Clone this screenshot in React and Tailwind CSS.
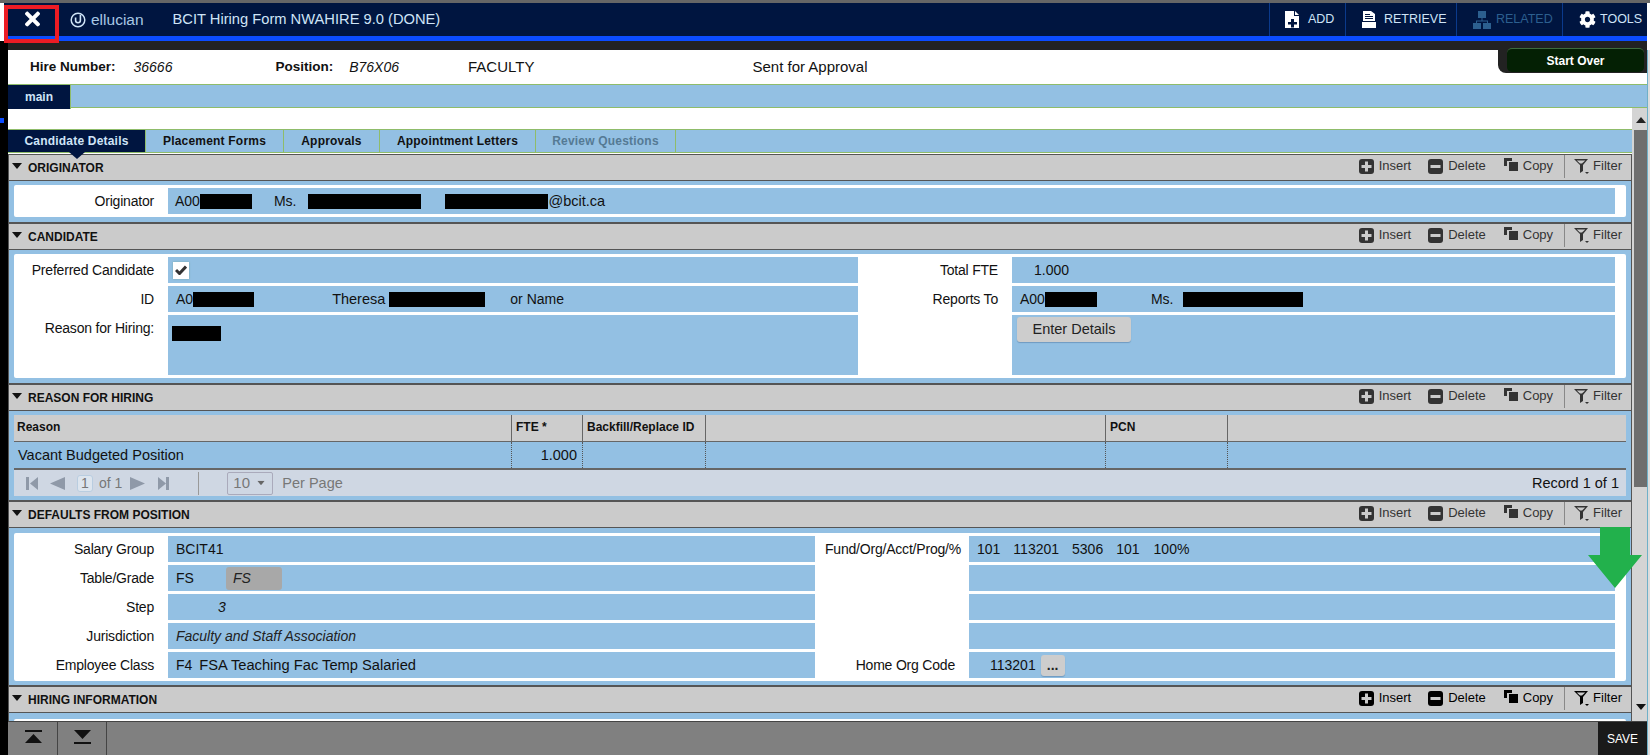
import { FaCog, FaTimes } from 'react-icons/fa'

function Redact({ w, h = 15, ml = 0 }) {
  return <span className="inline-block shrink-0 bg-black" style={{ width: w, height: h, marginLeft: ml }} />
}

function Caret({ className = '' }) {
  return (
    <svg width="10" height="6" viewBox="0 0 10 6" className={className}>
      <path d="M0 0h10L5 6z" fill="currentColor" />
    </svg>
  )
}

function BoxIcon({ minus }) {
  return (
    <svg width="15" height="15" viewBox="0 0 15 15" className="shrink-0">
      <rect width="15" height="15" rx="3" fill="currentColor" />
      <rect x="2.5" y="6" width="10" height="3" fill="#cbcbcb" />
      {!minus && <rect x="6" y="2.5" width="3" height="10" fill="#cbcbcb" />}
    </svg>
  )
}

function CopyIcon() {
  return (
    <svg width="15" height="14" viewBox="0 0 15 14" className="mb-[3px] shrink-0">
      <path d="M0 0h8v3H3v5H0z" fill="currentColor" />
      <rect x="5" y="4" width="9" height="9" fill="currentColor" />
    </svg>
  )
}

function FilterIcon() {
  return (
    <svg width="16" height="17" viewBox="0 0 16 17" className="shrink-0">
      <path d="M0 1h14L9 7v6l-3 2V7z" fill="currentColor" />
      <path d="M2.8 2.5h8.4L8 5.6H6z" fill="#cbcbcb" />
      <path d="M11 14h4l-2 2z" fill="currentColor" />
    </svg>
  )
}

function Section({ title, dark, children, bodyClass = '' }) {
  return (
    <section className="shrink-0 border-x border-[#555]">
      <div className="flex h-[26px] items-center border-b border-[#555] bg-[#cbcbcb]">
        <Caret className="ml-[3px] mb-1 text-[#111]" />
        <span className="ml-[6px] text-xs font-bold text-[#111]">{title}</span>
        <div className={`ml-auto flex h-full items-center pb-[3px] text-[13px] ${dark ? 'text-black' : 'text-[#333]'}`}>
          <span className="flex items-center gap-[5px]"><BoxIcon />Insert</span>
          <span className="ml-[17px] flex items-center gap-[5px]"><BoxIcon minus />Delete</span>
          <span className="ml-[18px] flex items-center gap-1"><CopyIcon />Copy</span>
          <span className="ml-[11px] h-[23px] border-l border-[#888]" />
          <span className="ml-[9px] mr-[9px] flex items-center gap-[3px]"><FilterIcon />Filter</span>
        </div>
      </div>
      <div className={`bg-[#93c0e3] px-[5px] ${bodyClass}`}>{children}</div>
    </section>
  )
}

function Card({ children, className = '' }) {
  return <div className={`flex flex-col gap-[3px] rounded-[2px] bg-white py-[3px] pr-[11px] ${className}`}>{children}</div>
}

function Label({ children, className = 'w-[140px]' }) {
  return <div className={`shrink-0 text-right text-sm tracking-[-0.2px] text-[#111] ${className}`}>{children}</div>
}

function Field({ children, className = '' }) {
  return <div className={`flex h-[26px] items-center bg-[#93c0e3] text-sm text-[#111] ${className}`}>{children}</div>
}

function TopAction({ icon, label, className = '', disabled }) {
  return (
    <div className={`flex h-full items-center border-l border-[#0b3a8c] text-[12.5px] ${disabled ? 'text-[#2c5f8f]' : 'text-[#cfe4f7]'} ${className}`}>
      {icon}
      {label}
    </div>
  )
}

function Tab({ children, className }) {
  return (
    <div className={`flex h-full items-center justify-center border-r border-[#8fbc6a] text-xs font-bold tracking-[0.2px] ${className}`}>
      {children}
    </div>
  )
}

function PagerArrow({ d, w = 15 }) {
  return (
    <svg width={w} height="15" viewBox={`0 0 ${w} 15`} className="shrink-0 text-[#8f99a8]">
      <path d={d} fill="currentColor" />
    </svg>
  )
}

function GridCell({ children, className = '' }) {
  return <div className={`flex h-full items-center ${className}`}>{children}</div>
}

export default function App() {
  return (
    <div className="relative flex h-[755px] w-[1650px] flex-col overflow-hidden bg-white font-['Liberation_Sans',Arial,sans-serif]">
      {/* top bar */}
      <div className="h-[3px] shrink-0 bg-[#666]" />
      <div className="shrink-0 bg-white pl-1 pr-[3px]">
        <div className="flex h-[33px] items-center bg-[#001540]">
          <FaTimes className="ml-[21px] mb-[2px] w-[15px] shrink-0 text-[22px] text-white" />
          <svg width="16" height="16" viewBox="0 0 16 16" className="ml-[30px] text-[#cfe4f7]">
            <circle cx="8" cy="8" r="6.8" fill="none" stroke="currentColor" strokeWidth="1.5" />
            <path d="M5.6 5.5v2.8a2.4 2.4 0 0 0 4.8 0V3" fill="none" stroke="currentColor" strokeWidth="1.6" />
          </svg>
          <span className="ml-[5px] text-[15.5px] text-[#a9c8e4]">ellucian</span>
          <span className="ml-[29px] text-[14.7px] text-[#cfe4f7]">BCIT Hiring Form NWAHIRE 9.0 (DONE)</span>
          <div className="ml-auto flex h-full">
            <TopAction
              className="w-[76px] pl-[15px]"
              label="ADD"
              icon={
                <svg width="15" height="17" viewBox="0 0 15 17" className="mr-2 text-white">
                  <path d="M0 0h9v5h5v12H0z" fill="currentColor" />
                  <path d="M10 0l4 4h-4z" fill="currentColor" />
                  <path d="M6 8h3v3h3v2.5H9V16.5H6v-3H3V11h3z" fill="#001540" />
                </svg>
              }
            />
            <TopAction
              className="w-[111px] pl-4"
              label="RETRIEVE"
              icon={
                <svg width="14" height="17" viewBox="0 0 14 17" className="mr-2 text-white">
                  <path d="M1 0h8l4 3v7H1zM0 11h14v6H0z" fill="currentColor" />
                  <path d="M3 3h5v1H3zM3 5h8v1H3zM3 7h8v1H3z" fill="#001540" />
                </svg>
              }
            />
            <TopAction
              disabled
              className="w-[106px] pl-4 font-normal"
              label="RELATED"
              icon={
                <svg width="18" height="18" viewBox="0 0 18 18" className="mr-[5px]">
                  <path d="M5 0h8v7H5zM8.5 7h1v2.5H15V12h-1v-1.5H4V12H3V9.5h5.5zM0 12h8v6H0zM10 12h8v6h-8z" fill="currentColor" />
                </svg>
              }
            />
            <TopAction
              className="w-[85px] pl-4"
              label="TOOLS"
              icon={<FaCog className="mr-1 text-[17px] text-white" />}
            />
          </div>
        </div>
        <div className="-ml-1 flex">
          <div className="w-1 bg-white" />
          <div className="h-[5px] flex-1 bg-[#0b4cff]" />
        </div>
      </div>
      <div className="flex h-[9px] shrink-0 pr-[3px]">
        <div className="w-2 bg-black" />
        <div className="flex-1 bg-[#222]" />
      </div>

      <div className="relative flex min-h-0 flex-1">
        <div className="w-2 shrink-0 bg-black" />
        <span className="absolute left-0 top-[68px] h-[5px] w-1 bg-[#0b4cff]" />

        <div className="flex w-[1639px] shrink-0 flex-col">
          {/* hire row */}
          <div className="relative flex h-[34px] shrink-0 items-center text-[#111]">
            <span className="ml-[22px] text-[13.5px] font-bold">Hire Number:</span>
            <span className="ml-[18px] text-sm italic">36666</span>
            <span className="ml-[103px] text-[13.5px] font-bold">Position:</span>
            <span className="ml-4 text-sm italic">B76X06</span>
            <span className="ml-[69px] text-[15px]">FACULTY</span>
            <span className="ml-[218px] text-[15px]">Sent for Approval</span>
            <div className="absolute right-0 top-0 h-[23px] w-[149px] rounded-bl-[8px] bg-[#222] pl-[9px] pr-[3px]">
              <div className="-mt-[2px] flex h-6 items-center justify-center rounded-[5px] border-t border-[#3d6b3d] bg-[#042004] text-xs font-bold text-white">
                Start Over
              </div>
            </div>
          </div>

          {/* main tab row */}
          <div className="relative h-6 shrink-0 border-y border-[#8fbc6a] bg-[#93c0e3]">
            <div className="absolute left-0 top-0 flex h-6 w-[63px] items-center justify-center border-r border-[#8fbc6a] bg-[#001540] text-xs font-bold text-[#cfe4f7]">
              main
            </div>
          </div>

          <div className="flex min-h-0 flex-1">
            <div className="flex min-w-0 flex-1 flex-col overflow-hidden">
              <div className="h-[21px] shrink-0" />

              {/* page tabs */}
              <div className="relative z-10 flex h-[24px] shrink-0 border-y border-[#8fbc6a] bg-[#93c0e3] pr-px">
                <Tab className="w-[138px] bg-[#001540] text-[#cfe4f7]">Candidate Details</Tab>
                <Tab className="w-[138px] text-[#111]">Placement Forms</Tab>
                <Tab className="w-[96px] text-[#111]">Approvals</Tab>
                <Tab className="w-[156px] text-[#111]">Appointment Letters</Tab>
                <Tab className="w-[140px] text-[#557a94]">Review Questions</Tab>
                <span className="absolute left-[61px] top-[22px] h-0 w-0 border-x-[8px] border-t-[7px] border-x-transparent border-t-[#001540]" />
              </div>

              <div className="h-px shrink-0 bg-white" />
              <div className="h-px shrink-0 bg-[#555]" />

              <Section title="ORIGINATOR" bodyClass="pt-1 pb-[5px]">
                <Card>
                  <div className="flex items-center">
                    <Label>Originator</Label>
                    <Field className="ml-[14px] flex-1 pl-[7px]">
                      <span>A00</span>
                      <Redact w={52} />
                      <span className="ml-[22px]">Ms.</span>
                      <Redact w={113} ml={12} />
                      <Redact w={103} ml={24} />
                      <span className="text-[14.5px]">@bcit.ca</span>
                    </Field>
                  </div>
                </Card>
              </Section>

              <div className="h-0.5 shrink-0 bg-[#555]" />

              <Section title="CANDIDATE" bodyClass="pt-1 pb-[5px]">
                <Card>
                  <div className="flex items-center">
                    <Label>Preferred Candidate</Label>
                    <Field className="ml-[14px] w-[690px] pl-[5px]">
                      <span className="flex h-[17px] w-[16px] items-center justify-center bg-white shadow-[0_0_2px_#7aa]">
                        <svg width="12" height="10" viewBox="0 0 12 10">
                          <path d="M1 5l3.5 3.5L11 1.5" fill="none" stroke="#333" strokeWidth="3" />
                        </svg>
                      </span>
                    </Field>
                    <Label className="w-[140px]">Total FTE</Label>
                    <Field className="ml-[14px] flex-1 pl-[22px]">1.000</Field>
                  </div>
                  <div className="flex items-center">
                    <Label>ID</Label>
                    <Field className="ml-[14px] w-[690px] pl-2">
                      <span>A0</span>
                      <Redact w={61} />
                      <span className="ml-[78px] text-[14.5px]">Theresa</span>
                      <Redact w={96} ml={4} />
                      <span className="ml-[25px]">or Name</span>
                    </Field>
                    <Label className="w-[140px]">Reports To</Label>
                    <Field className="ml-[14px] flex-1 pl-2">
                      <span>A00</span>
                      <Redact w={52} />
                      <span className="ml-[54px]">Ms.</span>
                      <Redact w={120} ml={10} />
                    </Field>
                  </div>
                  <div className="flex items-start">
                    <Label className="w-[140px] pt-[3px]">Reason for Hiring:</Label>
                    <div className="ml-[14px] h-[60px] w-[690px] bg-[#93c0e3] pl-1 pt-[9px]">
                      <Redact w={49} />
                    </div>
                    <div className="w-[154px]" />
                    <div className="h-[60px] flex-1 bg-[#93c0e3] pl-[5px] pt-[2px]">
                      <button className="h-[25px] w-[114px] rounded-[3px] bg-[#cdcdcd] text-[14.5px] text-[#222] shadow-[0_1px_1px_#6f9ac0]">
                        Enter Details
                      </button>
                    </div>
                  </div>
                </Card>
              </Section>

              <div className="h-0.5 shrink-0 bg-[#555]" />

              <Section title="REASON FOR HIRING" bodyClass="pt-1 pb-1">
                <div className="grid h-[27px] grid-cols-[497px_71px_123px_400px_122px_1fr] border-b border-[#666] bg-[#cdcdcd] text-xs font-bold text-[#111]">
                  <GridCell className="pb-[2px] pl-[3px]">Reason</GridCell>
                  <GridCell className="border-l border-[#666] pb-[2px] pl-1">FTE *</GridCell>
                  <GridCell className="border-l border-[#666] pb-[2px] pl-1">Backfill/Replace ID</GridCell>
                  <GridCell className="border-l border-[#666]" />
                  <GridCell className="border-l border-[#666] pb-[2px] pl-1">PCN</GridCell>
                  <GridCell className="border-l border-[#666]" />
                </div>
                <div className="grid h-[28px] grid-cols-[497px_71px_123px_400px_122px_1fr] border-b-2 border-[#666] text-[14.5px] text-[#111]">
                  <GridCell className="pl-1 pt-px">Vacant Budgeted Position</GridCell>
                  <GridCell className="justify-end border-l border-dotted border-[#555] pr-[5px] pt-px">1.000</GridCell>
                  <GridCell className="border-l border-dotted border-[#555]" />
                  <GridCell className="border-l border-dotted border-[#555]" />
                  <GridCell className="border-l border-dotted border-[#555]" />
                  <GridCell className="border-l border-dotted border-[#555]" />
                </div>
                <div className="flex h-[26px] items-center bg-[#cfd7e3] pl-3 text-sm text-[#777]">
                  <PagerArrow w={12} d="M0 1h3v13H0zM12 1v13L4 7.5z" />
                  <span className="ml-[12px]" />
                  <PagerArrow d="M15 1v13L0 7.5z" />
                  <span className="ml-3 flex h-[17px] w-[16px] items-center justify-center rounded-[3px] border border-[#b9cde0] bg-[#dde5ee]">1</span>
                  <span className="ml-[6px]">of 1</span>
                  <span className="ml-2" />
                  <PagerArrow d="M0 1v13l15-6.5z" />
                  <span className="ml-[13px]" />
                  <PagerArrow w={11} d="M0 1l8 6.5L0 14zM8 1h3v13H8z" />
                  <span className="ml-[29px] h-[23px] border-l border-[#999]" />
                  <span className="ml-[28px] flex h-[23px] w-[46px] items-center rounded-[2px] border border-[#aab] pl-[5px] text-[15px]">
                    10
                    <Caret className="ml-[6px] scale-75 text-[#666]" />
                  </span>
                  <span className="ml-[9px] text-[14.5px]">Per Page</span>
                  <span className="ml-auto pr-[7px] text-[14.5px] text-[#111]">Record 1 of 1</span>
                </div>
              </Section>

              <div className="h-0.5 shrink-0 bg-[#555]" />

              <Section title="DEFAULTS FROM POSITION" bodyClass="pt-[5px] pb-1">
                <Card>
                  <div className="flex items-center">
                    <Label>Salary Group</Label>
                    <Field className="ml-[14px] w-[647px] pl-2">BCIT41</Field>
                    <Label className="w-[146px]">Fund/Org/Acct/Prog/%</Label>
                    <Field className="ml-2 flex-1 pl-2">
                      <span>101</span>
                      <span className="ml-[13px]">113201</span>
                      <span className="ml-[13px]">5306</span>
                      <span className="ml-[13px]">101</span>
                      <span className="ml-[14px]">100%</span>
                    </Field>
                  </div>
                  <div className="flex items-center">
                    <Label>Table/Grade</Label>
                    <Field className="ml-[14px] w-[647px] pl-2">
                      <span>FS</span>
                      <span className="ml-8 flex h-[23px] w-14 items-center rounded-[3px] bg-[#a8a8a8] pl-[7px] italic text-[#222]">FS</span>
                    </Field>
                    <div className="w-[154px]" />
                    <Field className="flex-1" />
                  </div>
                  <div className="flex items-center">
                    <Label>Step</Label>
                    <Field className="ml-[14px] w-[647px] pl-[50px] italic">3</Field>
                    <div className="w-[154px]" />
                    <Field className="flex-1" />
                  </div>
                  <div className="flex items-center">
                    <Label>Jurisdiction</Label>
                    <Field className="ml-[14px] w-[647px] pl-2 text-[#222] italic">Faculty and Staff Association</Field>
                    <div className="w-[154px]" />
                    <Field className="flex-1" />
                  </div>
                  <div className="flex items-center">
                    <Label>Employee Class</Label>
                    <Field className="ml-[14px] w-[647px] pl-2">
                      <span>F4</span>
                      <span className="ml-[7px] text-[14.7px]">FSA Teaching Fac Temp Salaried</span>
                    </Field>
                    <Label className="w-[140px]">Home Org Code</Label>
                    <Field className="ml-[14px] flex-1 pl-[21px]">
                      <span>113201</span>
                      <span className="ml-[5px] flex h-[21px] w-6 items-center justify-center rounded-[3px] bg-[#cdcdcd] font-bold leading-none text-[#222] shadow-[0_1px_1px_#6f9ac0]">...</span>
                    </Field>
                  </div>
                </Card>
              </Section>

              <div className="h-0.5 shrink-0 bg-[#555]" />

              <Section title="HIRING INFORMATION" dark bodyClass="h-2 pt-1.5">
                <div className="h-2 rounded-t-[2px] bg-white" />
              </Section>
            </div>

            {/* scrollbar */}
            <div className="flex w-[15px] shrink-0 flex-col bg-[#d4d4d4] pt-px">
              <div className="flex h-[21px] shrink-0 items-center justify-center pl-[3px]">
                <Caret className="rotate-180 text-[#222]" />
              </div>
              <div className="ml-[2px] h-[357px] shrink-0 bg-[#6e6e6e]" />
              <div className="mt-auto flex h-[21px] items-center justify-center pb-2 pl-[3px]">
                <Caret className="text-[#111]" />
              </div>
            </div>
          </div>

          {/* footer */}
          <div className="flex h-[34px] shrink-0 items-stretch border-t border-[#444] bg-[#808080]">
            <div className="flex w-[50px] items-center justify-center border-r border-[#444] pl-px">
              <svg width="17" height="14" viewBox="0 0 17 14" className="mb-[3px] text-[#111]">
                <path d="M0 0h17v2H0zM8.5 4L17 13H0z" fill="currentColor" />
              </svg>
            </div>
            <div className="flex w-[49px] items-center justify-center border-r border-[#444]">
              <svg width="17" height="14" viewBox="0 0 17 14" className="mb-[3px] text-[#111]">
                <path d="M0 0h17L8.5 9zM0 12h17v2H0z" fill="currentColor" />
              </svg>
            </div>
            <div className="ml-auto flex w-[49px] items-center justify-center bg-[#1a1a1a] text-xs text-white">SAVE</div>
          </div>
        </div>

        <div className="flex-1 border-l border-[#6fb0c8] bg-[#ddd]" />
      </div>

      {/* annotations on the screenshot */}
      <div className="absolute left-1 top-[5px] h-[38px] w-[55px] border-4 border-[#ed1c24]" />
      <svg width="56" height="62" viewBox="0 0 56 62" className="absolute left-[1587px] top-[527px]">
        <path d="M13 0h30v28h12L28 61 1 28h12z" fill="#22b14c" />
      </svg>
    </div>
  )
}
